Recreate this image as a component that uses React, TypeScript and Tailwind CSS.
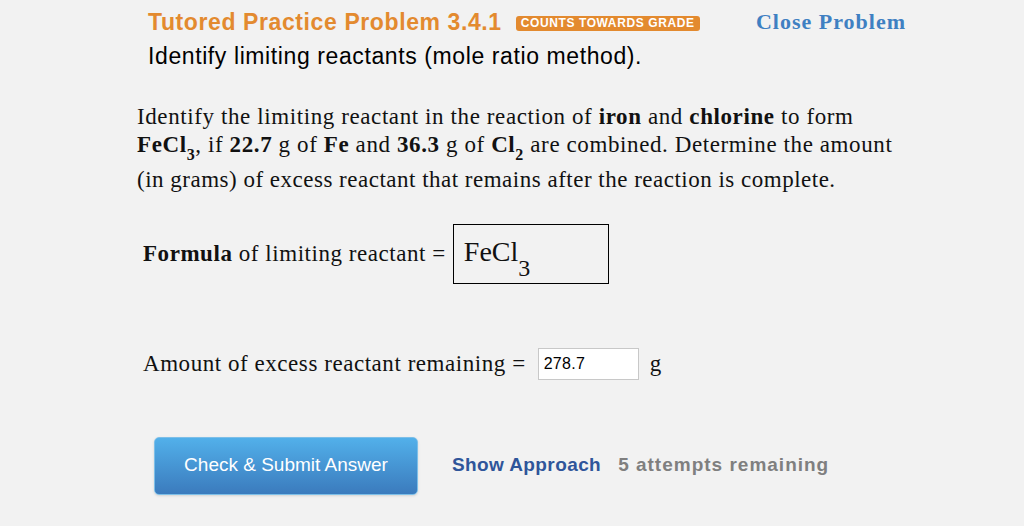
import React from 'react';

const sans = { fontFamily: '"Liberation Sans", Arial, sans-serif' };
const serif = { fontFamily: '"Liberation Serif", "Times New Roman", serif' };

export default function App() {
  return (
    <div className="w-[1024px] h-[526px] bg-[#f2f2f2] overflow-hidden">
      {/* Header */}
      <div className="flex items-start pl-[148px] pr-[118px] pt-[8px]">
        <div className="flex-1" style={sans}>
          <div className="flex items-center">
            <span className="text-[23px] font-bold tracking-[0.6px] text-[#e38a2f] leading-[28px]">
              Tutored Practice Problem 3.4.1
            </span>
            <span className="ml-[14px] mt-[3px] bg-[#e38a2f] text-white text-[12px] tracking-[0.6px] font-bold rounded-[3px] px-[5px] h-[15px] leading-[15px]">
              COUNTS TOWARDS GRADE
            </span>
          </div>
          <div className="text-[23px] tracking-[0.6px] text-black leading-[28px] mt-[6px]">
            Identify limiting reactants (mole ratio method).
          </div>
        </div>
        <div className="text-[22px] font-bold tracking-[1px] text-[#3f80c2] leading-[28px]" style={serif}>
          Close Problem
        </div>
      </div>

      {/* Question */}
      <div className="pl-[137px] mt-[32px] text-[23px] tracking-[0.6px] text-[#111]" style={serif}>
        <div className="h-[28px] leading-[30px]">
          Identify the limiting reactant in the reaction of <b>iron</b> and <b>chlorine</b> to form
        </div>
        <div className="h-[35px] leading-[30px]">
          <b>
            FeCl<sub className="text-[16px] align-[-4px] leading-none">3</sub>
          </b>
          , if <b>22.7</b> g of <b>Fe</b> and <b>36.3</b> g of{' '}
          <b>
            Cl<sub className="text-[16px] align-[-4px] leading-none">2</sub>
          </b>{' '}
          are combined. Determine the amount
        </div>
        <div className="h-[30px] leading-[30px] tracking-[0.5px]">
          (in grams) of excess reactant that remains after the reaction is complete.
        </div>
      </div>

      {/* Formula */}
      <div className="flex items-center pl-[143px] mt-[29px] text-[23px] tracking-[0.55px] text-[#111]" style={serif}>
        <span>
          <b>Formula</b> of limiting reactant =
        </span>
        <div className="ml-[7px] w-[156px] h-[60px] border-[1.5px] border-black flex items-center pl-[10px] pb-[3px]">
          <span className="text-[28px] tracking-normal">
            FeCl<sub className="text-[24px] align-[-9px] leading-none">3</sub>
          </span>
        </div>
      </div>

      {/* Amount */}
      <div className="flex items-center pl-[143px] mt-[63px] text-[23px] tracking-[0.55px] text-[#111]" style={serif}>
        <span>Amount of excess reactant remaining =</span>
        <div
          className="ml-[12px] w-[101px] h-[32px] bg-white border border-[#c8c8c8] flex items-center pl-[5px] text-[16px] tracking-[0.3px] text-black"
          style={sans}
        >
          278.7
        </div>
        <span className="ml-[11px]">g</span>
      </div>

      {/* Actions */}
      <div className="flex items-center pl-[154px] mt-[55px]" style={sans}>
        <button className="w-[264px] h-[58px] rounded-[5px] border border-[#7dbfe8] bg-gradient-to-b from-[#52b0ea] to-[#3b7bbd] text-white text-[19px] shadow-sm">
          Check &amp; Submit Answer
        </button>
        <span className="ml-[34px] text-[19px] tracking-[0.4px] font-bold text-[#2f559a]">Show Approach</span>
        <span className="ml-[17px] text-[19px] tracking-[1px] font-bold text-[#7f7f7f]">5 attempts remaining</span>
      </div>
    </div>
  );
}
